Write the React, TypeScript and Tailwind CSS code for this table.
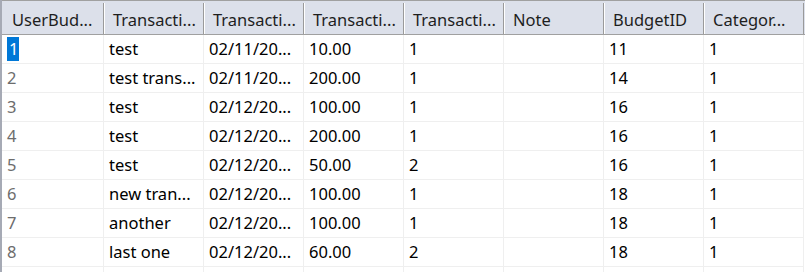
import React from "react";

const headers = [
  "UserBud...",
  "Transacti...",
  "Transacti...",
  "Transacti...",
  "Transacti...",
  "Note",
  "BudgetID",
  "Categor...",
];

const rows: string[][] = [
  ["1", "test", "02/11/20...", "10.00", "1", "", "11", "1"],
  ["2", "test trans...", "02/11/20...", "200.00", "1", "", "14", "1"],
  ["3", "test", "02/12/20...", "100.00", "1", "", "16", "1"],
  ["4", "test", "02/12/20...", "200.00", "1", "", "16", "1"],
  ["5", "test", "02/12/20...", "50.00", "2", "", "16", "1"],
  ["6", "new tran...", "02/12/20...", "100.00", "1", "", "18", "1"],
  ["7", "another", "02/12/20...", "100.00", "1", "", "18", "1"],
  ["8", "last one", "02/12/20...", "60.00", "2", "", "18", "1"],
  ["", "", "", "", "", "", "", ""],
];

export default function App() {
  return (
    <div
      className="w-[805px] h-[272px] overflow-hidden bg-white text-[16.5px]"
      style={{ fontFamily: '"Noto Sans", "Open Sans", sans-serif' }}
    >
      <div className="h-full border-l-2 border-[#a6aab5] flex flex-col">
        {/* header */}
        <div className="flex h-[35px] border-t border-b border-[#a0a0a0] bg-[#dce0ea] shrink-0">
          {headers.map((h, i) => (
            <div
              key={i}
              className={`flex items-stretch ${i === 0 ? "w-[102px]" : "w-[100px]"}`}
            >
              {i !== 0 && <div className="w-px bg-white mt-[2px]" />}
              <div
                className={`flex-1 flex items-center pt-[5px] whitespace-nowrap overflow-hidden text-[#1e1e1e] ${
                  i === 0 ? "pl-[10px]" : "pl-[8px]"
                }`}
              >
                {h}
              </div>
              <div className="w-px bg-[#9a9a9a] mt-[2px]" />
            </div>
          ))}
        </div>
        {/* body */}
        <div className="flex flex-col">
          {rows.map((r, ri) => (
            <div key={ri} className="flex h-[29px] shrink-0">
              {r.map((c, ci) => (
                <div
                  key={ci}
                  className={`flex items-center pt-px pl-[5px] border-r border-b border-[#efefef] whitespace-nowrap overflow-hidden ${
                    ci === 0 ? "w-[102px] text-[#6d6d6d]" : "w-[100px] text-black"
                  }`}
                >
                  {ri === 0 && ci === 0 ? (
                    <span className="inline-block bg-[#0078d7] text-white leading-[24px] pl-[2px] pr-px -mt-[2px]">
                      {c}
                    </span>
                  ) : (
                    c
                  )}
                </div>
              ))}
            </div>
          ))}
        </div>
      </div>
    </div>
  );
}
